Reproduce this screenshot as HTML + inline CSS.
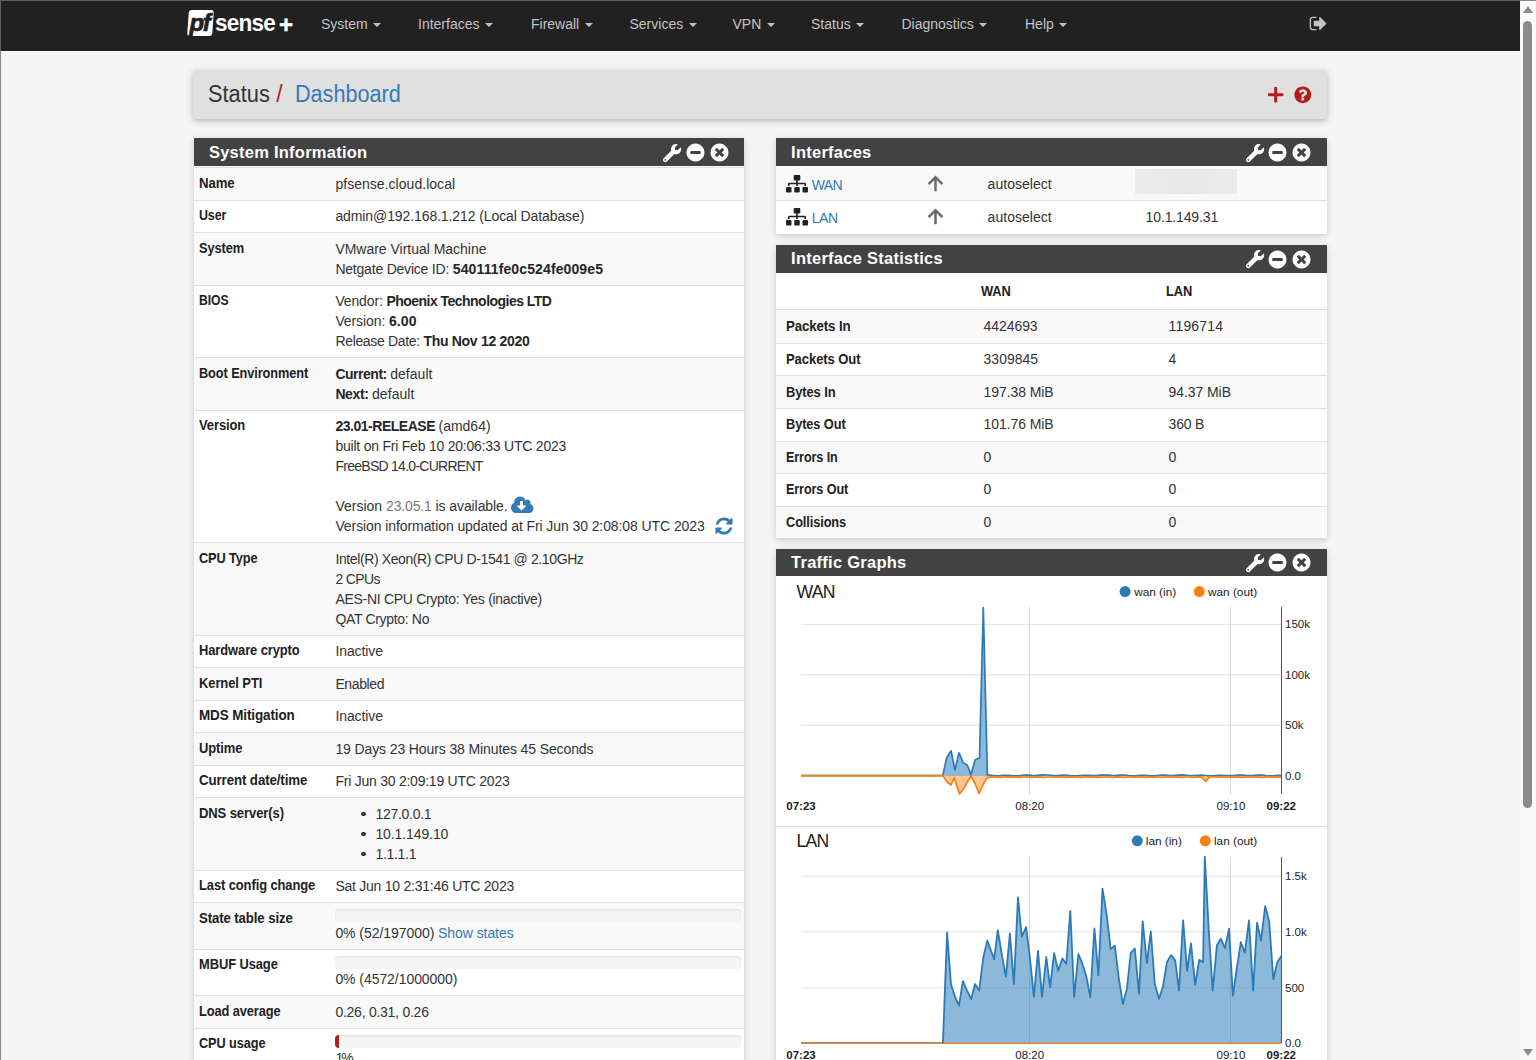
<!DOCTYPE html>
<html lang="en"><head><meta charset="utf-8"><title>pfsense.cloud.local - Status: Dashboard</title>
<style>
html,body{margin:0;padding:0}
body{width:1536px;height:1060px;overflow:hidden;position:relative;background:#f5f5f5;
 font:14px/20px "Liberation Sans",Arial,sans-serif;color:#212121;letter-spacing:-0.1px}
*{box-sizing:border-box}
a{color:#337ab7;text-decoration:none}
.ic{display:inline-block;vertical-align:middle;overflow:visible}
#frameT{position:absolute;left:0;top:0;width:1536px;height:1px;background:rgba(110,110,110,.8);z-index:50}
#frameL{position:absolute;left:0;top:1px;width:1px;height:1059px;background:rgba(110,110,110,.8);z-index:50}
#nav{position:absolute;left:0;top:0;width:1520px;height:51px;background:#212121;border-bottom:0}
#navline{position:absolute;left:0;top:51px;width:1520px;height:1px;background:#fff}
.ni{position:absolute;top:14px;color:#c4c4c4;font-size:14px;line-height:20px;letter-spacing:0;white-space:nowrap}
.ni i{display:inline-block;width:0;height:0;border-left:4.2px solid transparent;border-right:4.2px solid transparent;border-top:4.4px solid #c4c4c4;margin-left:5.6px;vertical-align:1.8px}
#sb{position:absolute;left:1520px;top:1px;width:16px;height:1059px;background:#fafafa}
#sb .th{position:absolute;left:3.4px;top:19.7px;width:9.1px;height:787.6px;border-radius:5px;background:#8b8b8b}
#sb .up{position:absolute;left:2.7px;top:4.7px;width:0;height:0;border-left:5.4px solid transparent;border-right:5.4px solid transparent;border-bottom:7.2px solid #8b8b8b}
#sb .dn{position:absolute;left:2.7px;top:1048px;width:0;height:0;border-left:5.4px solid transparent;border-right:5.4px solid transparent;border-top:7px solid #8b8b8b}
#hdr{position:absolute;left:193px;top:70px;width:1134.4px;height:48.5px;background:#e0e0e0;border-radius:4px;
 box-shadow:0 2px 5px 0 rgba(0,0,0,.16),0 2px 10px 0 rgba(0,0,0,.12)}
#hdr .t{position:absolute;left:0;top:9.9px;font-size:23px;line-height:28px;letter-spacing:0;white-space:nowrap;color:#333}
#hdr .t span,#hdr .t a{position:absolute;top:0;display:inline-block;transform-origin:0 50%}
#hdr .t .sl{color:#b71c1c;left:83.2px}
#hdr .t a{left:101.6px;color:#337ab7;transform:scaleX(.939)}
.panel{position:absolute;background:#fff;box-shadow:0 2px 5px 0 rgba(0,0,0,.11),0 2px 10px 0 rgba(0,0,0,.08)}
.ph{position:relative;height:28.9px;background:#424242;color:#fff;font-weight:700;font-size:16.5px;line-height:28px;padding-left:15px;letter-spacing:.25px;white-space:nowrap}
.ph .ics{position:absolute;right:0;top:0;height:28px}
.row{display:flex;border-top:1px solid #e0e0e0;padding-top:5.5px}
.row.o{background:#f9f9f9}
.lb{width:141.5px;padding-left:5.5px;font-weight:700;white-space:nowrap;position:relative;top:-1px}
.lb span,.b{display:inline-block;transform:scaleX(.92);transform-origin:0 50%}
b{letter-spacing:-0.5px;color:#262626}
.vl{white-space:nowrap;color:#333}
.li{display:inline-block;margin-left:40px;position:relative}
.li:before{content:'';position:absolute;left:-14px;top:8px;width:4.5px;height:4.5px;border-radius:50%;background:#333}
.pb{height:13px;background:#f5f5f5;border-radius:4px;box-shadow:inset 0 1px 2px rgba(0,0,0,.1);width:406px;margin:.6px 0 .3px 0;overflow:hidden}
.pb i{display:block;height:100%;background:#b71c1c}

.ch text{font-family:"Liberation Sans",Arial,sans-serif;font-size:11.5px;fill:#212121;letter-spacing:0}
.ch .lg{font-size:11.8px}
.ch .ttl{font-size:17.6px;letter-spacing:-.75px}
.ch .bx{font-weight:700}
.ch .g{stroke:#e2e2e2;stroke-width:1}
.ch .gv{stroke:#d9d9d9;stroke-width:1;shape-rendering:crispEdges}
.ch .ax{stroke:#555;stroke-width:1;shape-rendering:crispEdges}
</style></head>
<body>
<div id="frameT"></div><div id="frameL"></div>
<div id="nav"><div id="logo" style="position:absolute;left:188px;top:9.5px;width:106px;height:27px"><div style="position:absolute;left:0;top:0;width:25px;height:26px;background:#fff;border-radius:3px;transform:skewX(-4deg)"></div><span style="position:absolute;left:1.5px;top:1px;font:italic 700 24px/24px 'Liberation Sans',sans-serif;letter-spacing:-1.5px;color:#212121;-webkit-text-stroke:.7px #212121">pf</span><span style="position:absolute;left:27px;top:-.2px;font:700 24px/28px 'Liberation Sans',sans-serif;color:#fff;display:inline-block;transform:scaleX(.94);transform-origin:0 50%;letter-spacing:-.85px">sense</span><span style="position:absolute;left:91px;top:1.2px;font:700 24px/28px 'Liberation Sans',sans-serif;color:#fff;letter-spacing:0;-webkit-text-stroke:.5px #fff">+</span></div><div class="ni" style="left:321px">System<i></i></div><div class="ni" style="left:418px">Interfaces<i></i></div><div class="ni" style="left:531px">Firewall<i></i></div><div class="ni" style="left:629.5px">Services<i></i></div><div class="ni" style="left:732.5px">VPN<i></i></div><div class="ni" style="left:811px">Status<i></i></div><div class="ni" style="left:901.5px">Diagnostics<i></i></div><div class="ni" style="left:1025px">Help<i></i></div><svg class="ic" width="19.00" height="19" viewBox="0 0 1792 1792" style="position:absolute;left:1309px;top:14px"><path fill="#c4c4c4" d="M704 1440q0 4 1 20t.5 26.500-3 23.500-10 19.500-20.500 6.500h-320q-119 0-203.500-84.500t-84.500-203.500v-704q0-119 84.500-203.500t203.500-84.500h320q13 0 22.500 9.500t9.500 22.500q0 4 1 20t.5 26.500-3 23.500-10 19.500-20.500 6.500h-320q-66 0-113 47t-47 113v704q0 66 47 113t113 47h312l11.500 1 11.500 3 8 5.500 7 9 2 13.500zm928-544q0 26-19 45l-544 544q-19 19-45 19t-45-19-19-45v-288h-448q-26 0-45-19t-19-45v-384q0-26 19-45t45-19h448v-288q0-26 19-45t45-19 45 19l544 544q19 19 19 45z"/></svg></div><div id="navline"></div>
<div id="hdr"><div class="t"><span style="left:14.7px;transform:scaleX(.948)">Status</span><span class="sl">/</span><a>Dashboard</a></div><svg class="ic" width="15.4" height="15.4" viewBox="0 0 15.4 15.4" style="position:absolute;left:1075.4px;top:17.3px"><path fill="#b71c1c" d="M6.2 .6a.6.6 0 0 1 .6-.6h1.8a.6.6 0 0 1 .6.6v5.6h5.6a.6.6 0 0 1 .6.6v1.8a.6.6 0 0 1-.6.6h-5.6v5.6a.6.6 0 0 1-.6.6h-1.8a.6.6 0 0 1-.6-.6v-5.6h-5.6a.6.6 0 0 1-.6-.6v-1.800a.6.6 0 0 1 .6-.6h5.6z"/></svg><svg class="ic" width="19.60" height="19.6" viewBox="0 0 1792 1792" style="position:absolute;left:1100.3px;top:15.1px"><path fill="#b71c1c" d="M1024 1376v-192q0-14-9-23t-23-9h-192q-14 0-23 9t-9 23v192q0 14 9 23t23 9h192q14 0 23-9t9-23zm256-672q0-88-55.500-163t-138.500-116-170-41q-243 0-371 213-15 24 8 42l132 100q7 6 19 6 16 0 25-12 53-68 86-92 34-24 86-24 48 0 85.500 26t37.500 59q0 38-20 61t-68 45q-63 28-115.500 86.500t-52.500 125.500v36q0 14 9 23t23 9h192q14 0 23-9t9-23q0-19 21.500-49.500t54.500-49.500q32-18 49-28.500t46-35 44.500-48 28-60.500 12.500-81zm384 192q0 209-103 385.5t-279.5 279.5-385.5 103-385.5-103-279.5-279.5-103-385.5 103-385.5 279.5-279.5 385.5-103 385.5 103 279.5 279.5 103 385.5z"/></svg></div>
<div class="panel" style="left:193.9px;top:138.2px;width:550.6px;height:940px"><div class="ph" style="height:28.1px;line-height:28.97px">System Information<svg class="ic" width="18.2" height="18.20" viewBox="0 0 512 512" style="position:absolute;right:63.3px;top:5.55px"><path fill="#fff" d="M507.73 109.1c-2.24-9.03-13.54-12.09-20.12-5.51l-74.36 74.36-67.88-11.31-11.31-67.88 74.36-74.36c6.62-6.62 3.43-17.9-5.66-20.16-47.38-11.74-99.55.91-136.58 37.93-39.64 39.64-50.55 97.1-34.05 147.2L18.74 402.76c-24.99 24.99-24.99 65.51 0 90.5 24.99 24.99 65.51 24.99 90.5 0l213.21-213.21c50.12 16.71 107.47 5.68 147.37-34.22 37.07-37.07 49.7-89.32 37.91-136.73zM64 472c-13.25 0-24-10.75-24-24 0-13.26 10.75-24 24-24s24 10.74 24 24c0 13.25-10.75 24-24 24z"/></svg><svg class="ic" width="21.00" height="21" viewBox="0 0 1792 1792" style="position:absolute;right:38.5px;top:3.95px"><path fill="#fff" d="M1344 960v-128q0-26-19-45t-45-19h-768q-26 0-45 19t-19 45v128q0 26 19 45t45 19h768q26 0 45-19t19-45zm320-64q0 209-103 385.5t-279.5 279.5-385.5 103-385.5-103-279.5-279.5-103-385.5 103-385.5 279.5-279.5 385.5-103 385.5 103 279.5 279.5 103 385.5z"/></svg><svg class="ic" width="21.00" height="21" viewBox="0 0 1792 1792" style="position:absolute;right:14.5px;top:3.95px"><path fill="#fff" d="M1277 1122q0-26-19-45l-181-181 181-181q19-19 19-45 0-27-19-46l-90-90q-19-19-46-19-26 0-45 19l-181 181-181-181q-19-19-45-19-27 0-46 19l-90 90q-19 19-19 46 0 26 19 45l181 181-181 181q-19 19-19 45 0 27 19 46l90 90q19 19 46 19 26 0 45-19l181-181 181 181q19 19 45 19 27 0 46-19l90-90q19-19 19-46zm387-226q0 209-103 385.5t-279.5 279.5-385.5 103-385.5-103-279.5-279.5-103-385.5 103-385.5 279.5-279.5 385.5-103 385.5 103 279.5 279.5 103 385.5z"/></svg></div><div style="height:.9px;background:#f9f9f9"></div><div class="row o" style="height:32.5px"><div class="lb"><span style="transform:scaleX(0.9413)">Name</span></div><div class="vl"><div><span style="letter-spacing:0.033px;">pfsense.cloud.local</span></div></div></div><div class="row" style="height:32.5px"><div class="lb"><span style="transform:scaleX(0.8863)">User</span></div><div class="vl"><div><span style="letter-spacing:-0.097px;">admin@192.168.1.212 (Local Database)</span></div></div></div><div class="row o" style="height:52.5px"><div class="lb"><span style="transform:scaleX(0.9174)">System</span></div><div class="vl"><div><span style="letter-spacing:-0.017px;">VMware Virtual Machine</span></div><div><span style="letter-spacing:-0.210px;">Netgate&nbsp;Device&nbsp;ID:&nbsp;</span><b style="letter-spacing:0.118px;">540111fe0c524fe009e5</b></div></div></div><div class="row" style="height:72.5px"><div class="lb"><span style="transform:scaleX(0.8705)">BIOS</span></div><div class="vl"><div><span style="letter-spacing:-0.145px;">Vendor:&nbsp;</span><b style="letter-spacing:-0.525px;">Phoenix Technologies LTD</b></div><div><span style="letter-spacing:-0.098px;">Version:&nbsp;</span><b style="letter-spacing:0.088px;">6.00</b></div><div><span style="letter-spacing:-0.329px;">Release&nbsp;Date:&nbsp;</span><b style="letter-spacing:-0.293px;">Thu Nov 12 2020</b></div></div></div><div class="row o" style="height:52.5px"><div class="lb"><span style="transform:scaleX(0.9115)">Boot Environment</span></div><div class="vl"><div><b style="letter-spacing:-0.481px;">Current:&nbsp;</b><span style="letter-spacing:0.036px;">default</span></div><div><b style="letter-spacing:-0.384px;">Next:&nbsp;</b><span style="letter-spacing:0.065px;">default</span></div></div></div><div class="row" style="height:132.5px"><div class="lb"><span style="transform:scaleX(0.9250)">Version</span></div><div class="vl"><div><b style="letter-spacing:-0.473px;">23.01-RELEASE&nbsp;</b><span style="letter-spacing:-0.006px;">(amd64)</span></div><div><span style="letter-spacing:-0.222px;">built on Fri Feb 10 20:06:33 UTC 2023</span></div><div><span style="letter-spacing:-0.726px;">FreeBSD 14.0-CURRENT</span></div><div>&nbsp;</div><div><span style="letter-spacing:0.001px;">Version&nbsp;</span><span style="letter-spacing:-0.139px;color:#777">23.05.1&nbsp;</span><span style="letter-spacing:-0.082px;">is&nbsp;available.&nbsp;</span><svg class="ic" width="22.50" height="21" viewBox="0 0 1920 1792" style="margin:-4px 0 0 0"><path fill="#337ab7" d="M1280 928q0-14-9-23-9-9-23-9h-224v-352q0-13-9.500-22.500t-22.500-9.500h-192q-13 0-22.500 9.500t-9.500 22.500v352h-224q-13 0-22.500 9.500t-9.500 22.500q0 14 9 23l352 352q9 9 23 9t23-9l351-351q10-12 10-24zm640 224q0 159-112.500 271.500t-271.500 112.500h-1088q-185 0-316.500-131.500t-131.500-316.500q0-130 70-240t188-165q-2-30-2-43 0-212 150-362t362-150q156 0 285.500 87t188.500 231q71-62 166-62 106 0 181 75t75 181q0 76-41 138 130 31 213.500 135.500t83.500 238.500z"/></svg></div><div><span style="letter-spacing:-0.087px;">Version information updated at Fri Jun 30 2:08:08 UTC 2023</span><svg class="ic" width="20.00" height="20" viewBox="0 0 1792 1792" style="margin:-3px 0 0 9.5px"><path fill="#337ab7" d="M1639 1056q0 5-1 7-64 268-268 434.500t-478 166.500q-146 0-282.500-55t-243.500-157l-129 129q-19 19-45 19t-45-19-19-45v-448q0-26 19-45t45-19h448q26 0 45 19t19 45-19 45l-137 137q71 66 161 102t187 36q134 0 250-65t186-179q11-17 53-117 8-23 30-23h192q13 0 22.500 9.500t9.500 22.500zm25-800v448q0 26-19 45t-45 19h-448q-26 0-45-19t-19-45 19-45l138-138q-148-137-349-137-134 0-250 65t-186 179q-11 17-53 117-8 23-30 23h-199q-13 0-22.500-9.500t-9.500-22.500v-7q65-268 270-434.500t480-166.500q146 0 284 55.500t245 156.500l130-129q19-19 45-19t45 19 19 45z"/></svg></div></div></div><div class="row o" style="height:92.5px"><div class="lb"><span style="transform:scaleX(0.9110)">CPU Type</span></div><div class="vl"><div><span style="letter-spacing:-0.387px;">Intel(R) Xeon(R) CPU D-1541 @ 2.10GHz</span></div><div><span style="letter-spacing:-0.606px;">2 CPUs</span></div><div><span style="letter-spacing:-0.294px;">AES-NI CPU Crypto: Yes (inactive)</span></div><div><span style="letter-spacing:-0.328px;">QAT Crypto: No</span></div></div></div><div class="row" style="height:32.5px"><div class="lb"><span style="transform:scaleX(0.9232)">Hardware crypto</span></div><div class="vl"><div><span style="letter-spacing:-0.081px;">Inactive</span></div></div></div><div class="row o" style="height:32.5px"><div class="lb"><span style="transform:scaleX(0.9271)">Kernel PTI</span></div><div class="vl"><div><span style="letter-spacing:-0.384px;">Enabled</span></div></div></div><div class="row" style="height:32.5px"><div class="lb"><span style="transform:scaleX(0.9594)">MDS Mitigation</span></div><div class="vl"><div><span style="letter-spacing:-0.081px;">Inactive</span></div></div></div><div class="row o" style="height:32.5px"><div class="lb"><span style="transform:scaleX(0.9272)">Uptime</span></div><div class="vl"><div><span style="letter-spacing:-0.112px;">19 Days 23 Hours 38 Minutes 45 Seconds</span></div></div></div><div class="row" style="height:32.5px"><div class="lb"><span style="transform:scaleX(0.9481)">Current date/time</span></div><div class="vl"><div><span style="letter-spacing:-0.239px;">Fri Jun 30 2:09:19 UTC 2023</span></div></div></div><div class="row o" style="height:72.5px"><div class="lb"><span style="transform:scaleX(0.9297)">DNS server(s)</span></div><div class="vl"><div><span class="li"><span style="letter-spacing:-0.277px;">127.0.0.1</span></span></div><div><span class="li"><span style="letter-spacing:-0.097px;">10.1.149.10</span></span></div><div><span class="li"><span style="letter-spacing:-0.290px;">1.1.1.1</span></span></div></div></div><div class="row" style="height:32.5px"><div class="lb"><span style="transform:scaleX(0.9234)">Last config change</span></div><div class="vl"><div><span style="letter-spacing:-0.246px;">Sat Jun 10 2:31:46 UTC 2023</span></div></div></div><div class="row o" style="height:46.5px"><div class="lb"><span style="transform:scaleX(0.9411)">State table size</span></div><div class="vl"><div class="pb"><i style="width:0"></i></div><div><span style="letter-spacing:-0.055px;">0%&nbsp;(52/197000)&nbsp;</span><a><span style="letter-spacing:-0.070px;">Show states</span></a></div></div></div><div class="row" style="height:46.5px"><div class="lb"><span style="transform:scaleX(0.9229)">MBUF Usage</span></div><div class="vl"><div class="pb"><i style="width:0"></i></div><div><span style="letter-spacing:-0.059px;">0% (4572/1000000)</span></div></div></div><div class="row o" style="height:32.5px"><div class="lb"><span style="transform:scaleX(0.9162)">Load average</span></div><div class="vl"><div><span style="letter-spacing:-0.251px;">0.26, 0.31, 0.26</span></div></div></div><div class="row" style="height:46.5px"><div class="lb"><span style="transform:scaleX(0.9091)">CPU usage</span></div><div class="vl"><div class="pb"><i style="width:4px"></i></div><div><span style="letter-spacing:-1.817px;">1%</span></div></div></div></div>
<div class="panel" style="left:776.1px;top:138.2px;width:550.9px;height:95.4px"><div class="ph" style="height:28.1px;line-height:28.97px">Interfaces<svg class="ic" width="18.2" height="18.20" viewBox="0 0 512 512" style="position:absolute;right:63.3px;top:5.55px"><path fill="#fff" d="M507.73 109.1c-2.24-9.03-13.54-12.09-20.12-5.51l-74.36 74.36-67.88-11.31-11.31-67.88 74.36-74.36c6.62-6.62 3.43-17.9-5.66-20.16-47.38-11.74-99.55.91-136.58 37.93-39.64 39.64-50.55 97.1-34.05 147.2L18.74 402.76c-24.99 24.99-24.99 65.51 0 90.5 24.99 24.99 65.51 24.99 90.5 0l213.21-213.21c50.12 16.71 107.47 5.68 147.37-34.22 37.07-37.07 49.7-89.32 37.91-136.73zM64 472c-13.25 0-24-10.75-24-24 0-13.26 10.75-24 24-24s24 10.74 24 24c0 13.25-10.75 24-24 24z"/></svg><svg class="ic" width="21.00" height="21" viewBox="0 0 1792 1792" style="position:absolute;right:38.5px;top:3.95px"><path fill="#fff" d="M1344 960v-128q0-26-19-45t-45-19h-768q-26 0-45 19t-19 45v128q0 26 19 45t45 19h768q26 0 45-19t19-45zm320-64q0 209-103 385.5t-279.5 279.5-385.5 103-385.5-103-279.5-279.5-103-385.5 103-385.5 279.5-279.5 385.5-103 385.5 103 279.5 279.5 103 385.5z"/></svg><svg class="ic" width="21.00" height="21" viewBox="0 0 1792 1792" style="position:absolute;right:14.5px;top:3.95px"><path fill="#fff" d="M1277 1122q0-26-19-45l-181-181 181-181q19-19 19-45 0-27-19-46l-90-90q-19-19-46-19-26 0-45 19l-181 181-181-181q-19-19-45-19-27 0-46 19l-90 90q-19 19-19 46 0 26 19 45l181 181-181 181q-19 19-19 45 0 27 19 46l90 90q19 19 46 19 26 0 45-19l181-181 181 181q19 19 45 19 27 0 46-19l90-90q19-19 19-46zm387-226q0 209-103 385.5t-279.5 279.5-385.5 103-385.5-103-279.5-279.5-103-385.5 103-385.5 279.5-279.5 385.5-103 385.5 103 279.5 279.5 103 385.5z"/></svg></div><div class="row o" style="height:33.9px;position:relative;padding:0;border-top:0;"><svg class="ic" width="22" height="17.60" viewBox="0 0 640 512" style="position:absolute;left:10px;top:8.40px"><path fill="#212121" d="M128 352H32c-17.67 0-32 14.33-32 32v96c0 17.67 14.33 32 32 32h96c17.67 0 32-14.33 32-32v-96c0-17.67-14.33-32-32-32zm-24-80h192v48h48v-48h192v48h48v-57.59c0-21.17-17.23-38.41-38.41-38.41H344v-64h40c17.67 0 32-14.33 32-32V32c0-17.67-14.33-32-32-32H256c-17.67 0-32 14.33-32 32v96c0 17.67 14.33 32 32 32h40v64H94.41C73.23 224 56 241.23 56 262.41V320h48v-48zm264 80h-96c-17.67 0-32 14.33-32 32v96c0 17.67 14.33 32 32 32h96c17.67 0 32-14.33 32-32v-96c0-17.67-14.33-32-32-32zm240 0h-96c-17.67 0-32 14.33-32 32v96c0 17.67 14.33 32 32 32h96c17.67 0 32-14.33 32-32v-96c0-17.67-14.33-32-32-32z"/></svg><a style="position:absolute;left:35.6px;top:8.45px"><span style="letter-spacing:-0.652px;">WAN</span></a><svg class="ic" width="17" height="17" viewBox="0 0 17 17" style="position:absolute;left:151px;top:8.85px"><path d="M8.5 16.3V2.2M1.6 9.1L8.5 2.2l6.9 6.9" fill="none" stroke="#666b6f" stroke-width="2.5" stroke-linejoin="miter"/></svg><span class="vl" style="position:absolute;left:211.5px;top:7.95px"><span style="letter-spacing:0.027px;">autoselect</span></span><span style="position:absolute;left:359.1px;top:3.1px;width:102px;height:25px;background:linear-gradient(90deg,#ececec,#e7e7e7 50%,#ececec)"></span></div><div class="row" style="height:33.3px;position:relative;padding:0;"><svg class="ic" width="22" height="17.60" viewBox="0 0 640 512" style="position:absolute;left:10px;top:6.80px"><path fill="#212121" d="M128 352H32c-17.67 0-32 14.33-32 32v96c0 17.67 14.33 32 32 32h96c17.67 0 32-14.33 32-32v-96c0-17.67-14.33-32-32-32zm-24-80h192v48h48v-48h192v48h48v-57.59c0-21.17-17.23-38.41-38.41-38.41H344v-64h40c17.67 0 32-14.33 32-32V32c0-17.67-14.33-32-32-32H256c-17.67 0-32 14.33-32 32v96c0 17.67 14.33 32 32 32h40v64H94.41C73.23 224 56 241.23 56 262.41V320h48v-48zm264 80h-96c-17.67 0-32 14.33-32 32v96c0 17.67 14.33 32 32 32h96c17.67 0 32-14.33 32-32v-96c0-17.67-14.33-32-32-32zm240 0h-96c-17.67 0-32 14.33-32 32v96c0 17.67 14.33 32 32 32h96c17.67 0 32-14.33 32-32v-96c0-17.67-14.33-32-32-32z"/></svg><a style="position:absolute;left:35.6px;top:6.45px"><span style="letter-spacing:-0.378px;">LAN</span></a><svg class="ic" width="17" height="17" viewBox="0 0 17 17" style="position:absolute;left:151px;top:6.45px"><path d="M8.5 16.3V2.2M1.6 9.1L8.5 2.2l6.9 6.9" fill="none" stroke="#666b6f" stroke-width="2.5" stroke-linejoin="miter"/></svg><span class="vl" style="position:absolute;left:211.5px;top:5.55px"><span style="letter-spacing:0.027px;">autoselect</span></span><span class="vl" style="position:absolute;left:369.5px;top:5.55px"><span style="letter-spacing:-0.134px;">10.1.149.31</span></span></div></div>
<div class="panel" style="left:776.1px;top:245.4px;width:550.9px;height:292.7px"><div class="ph" style="height:27.2px;line-height:26.77px">Interface Statistics<svg class="ic" width="18.2" height="18.20" viewBox="0 0 512 512" style="position:absolute;right:63.3px;top:5.10px"><path fill="#fff" d="M507.73 109.1c-2.24-9.03-13.54-12.09-20.12-5.51l-74.36 74.36-67.88-11.31-11.31-67.88 74.36-74.36c6.62-6.62 3.43-17.9-5.66-20.16-47.38-11.74-99.55.91-136.58 37.93-39.64 39.64-50.55 97.1-34.05 147.2L18.74 402.76c-24.99 24.99-24.99 65.51 0 90.5 24.99 24.99 65.51 24.99 90.5 0l213.21-213.21c50.12 16.71 107.47 5.68 147.37-34.22 37.07-37.07 49.7-89.32 37.91-136.73zM64 472c-13.25 0-24-10.75-24-24 0-13.26 10.75-24 24-24s24 10.74 24 24c0 13.25-10.75 24-24 24z"/></svg><svg class="ic" width="21.00" height="21" viewBox="0 0 1792 1792" style="position:absolute;right:38.5px;top:3.50px"><path fill="#fff" d="M1344 960v-128q0-26-19-45t-45-19h-768q-26 0-45 19t-19 45v128q0 26 19 45t45 19h768q26 0 45-19t19-45zm320-64q0 209-103 385.5t-279.5 279.5-385.5 103-385.5-103-279.5-279.5-103-385.5 103-385.5 279.5-279.5 385.5-103 385.5 103 279.5 279.5 103 385.5z"/></svg><svg class="ic" width="21.00" height="21" viewBox="0 0 1792 1792" style="position:absolute;right:14.5px;top:3.50px"><path fill="#fff" d="M1277 1122q0-26-19-45l-181-181 181-181q19-19 19-45 0-27-19-46l-90-90q-19-19-46-19-26 0-45 19l-181 181-181-181q-19-19-45-19-27 0-46 19l-90 90q-19 19-19 46 0 26 19 45l181 181-181 181q-19 19-19 45 0 27 19 46l90 90q19 19 46 19 26 0 45-19l181-181 181 181q19 19 45 19 27 0 46-19l90-90q19-19 19-46zm387-226q0 209-103 385.5t-279.5 279.5-385.5 103-385.5-103-279.5-279.5-103-385.5 103-385.5 279.5-279.5 385.5-103 385.5 103 279.5 279.5 103 385.5z"/></svg></div><div style="height:37.6px;position:relative;border-bottom:1.6px solid #ddd;font-weight:700"><span class="b" style="position:absolute;left:205px;top:8.2px;transform:scaleX(0.9182)">WAN</span><span class="b" style="position:absolute;left:390.2px;top:8.2px;transform:scaleX(0.9173)">LAN</span></div><div class="row o" style="height:32.7px;position:relative;padding:0;border-top:0;"><span class="b" style="position:absolute;left:10px;top:6.1px;font-weight:700;transform:scaleX(0.9456)">Packets In</span><span class="vl" style="position:absolute;left:207.5px;top:5.8999999999999995px"><span style="letter-spacing:-0.074px;">4424693</span></span><span class="vl" style="position:absolute;left:392.5px;top:5.8999999999999995px"><span style="letter-spacing:0.147px;">1196714</span></span></div><div class="row" style="height:32.55px;position:relative;padding:0;"><span class="b" style="position:absolute;left:10px;top:5.3px;font-weight:700;transform:scaleX(0.9328)">Packets Out</span><span class="vl" style="position:absolute;left:207.5px;top:5.1px"><span style="letter-spacing:-0.017px;">3309845</span></span><span class="vl" style="position:absolute;left:392.5px;top:5.1px"><span style="letter-spacing:-0.197px;">4</span></span></div><div class="row o" style="height:32.55px;position:relative;padding:0;"><span class="b" style="position:absolute;left:10px;top:5.3px;font-weight:700;transform:scaleX(0.9216)">Bytes In</span><span class="vl" style="position:absolute;left:207.5px;top:5.1px"><span style="letter-spacing:-0.083px;">197.38 MiB</span></span><span class="vl" style="position:absolute;left:392.5px;top:5.1px"><span style="letter-spacing:-0.083px;">94.37 MiB</span></span></div><div class="row" style="height:32.55px;position:relative;padding:0;"><span class="b" style="position:absolute;left:10px;top:5.3px;font-weight:700;transform:scaleX(0.9134)">Bytes Out</span><span class="vl" style="position:absolute;left:207.5px;top:5.1px"><span style="letter-spacing:-0.083px;">101.76 MiB</span></span><span class="vl" style="position:absolute;left:392.5px;top:5.1px"><span style="letter-spacing:-0.219px;">360 B</span></span></div><div class="row o" style="height:32.55px;position:relative;padding:0;"><span class="b" style="position:absolute;left:10px;top:5.3px;font-weight:700;transform:scaleX(0.8996)">Errors In</span><span class="vl" style="position:absolute;left:207.5px;top:5.1px"><span style="letter-spacing:-0.197px;">0</span></span><span class="vl" style="position:absolute;left:392.5px;top:5.1px"><span style="letter-spacing:-0.197px;">0</span></span></div><div class="row" style="height:32.55px;position:relative;padding:0;"><span class="b" style="position:absolute;left:10px;top:5.3px;font-weight:700;transform:scaleX(0.8998)">Errors Out</span><span class="vl" style="position:absolute;left:207.5px;top:5.1px"><span style="letter-spacing:-0.197px;">0</span></span><span class="vl" style="position:absolute;left:392.5px;top:5.1px"><span style="letter-spacing:-0.197px;">0</span></span></div><div class="row o" style="height:32.55px;position:relative;padding:0;"><span class="b" style="position:absolute;left:10px;top:5.3px;font-weight:700;transform:scaleX(0.9117)">Collisions</span><span class="vl" style="position:absolute;left:207.5px;top:5.1px"><span style="letter-spacing:-0.197px;">0</span></span><span class="vl" style="position:absolute;left:392.5px;top:5.1px"><span style="letter-spacing:-0.197px;">0</span></span></div></div>
<div class="panel" style="left:776.1px;top:549.1px;width:550.9px;height:530px"><div class="ph" style="height:26.9px;line-height:27.17px">Traffic Graphs<svg class="ic" width="18.2" height="18.20" viewBox="0 0 512 512" style="position:absolute;right:63.3px;top:4.95px"><path fill="#fff" d="M507.73 109.1c-2.24-9.03-13.54-12.09-20.12-5.51l-74.36 74.36-67.88-11.31-11.31-67.88 74.36-74.36c6.62-6.62 3.43-17.9-5.66-20.16-47.38-11.74-99.55.91-136.58 37.93-39.64 39.64-50.55 97.1-34.05 147.2L18.74 402.76c-24.99 24.99-24.99 65.51 0 90.5 24.99 24.99 65.51 24.99 90.5 0l213.21-213.21c50.12 16.71 107.47 5.68 147.37-34.22 37.07-37.07 49.7-89.32 37.91-136.73zM64 472c-13.25 0-24-10.75-24-24 0-13.26 10.75-24 24-24s24 10.74 24 24c0 13.25-10.75 24-24 24z"/></svg><svg class="ic" width="21.00" height="21" viewBox="0 0 1792 1792" style="position:absolute;right:38.5px;top:3.35px"><path fill="#fff" d="M1344 960v-128q0-26-19-45t-45-19h-768q-26 0-45 19t-19 45v128q0 26 19 45t45 19h768q26 0 45-19t19-45zm320-64q0 209-103 385.5t-279.5 279.5-385.5 103-385.5-103-279.5-279.5-103-385.5 103-385.5 279.5-279.5 385.5-103 385.5 103 279.5 279.5 103 385.5z"/></svg><svg class="ic" width="21.00" height="21" viewBox="0 0 1792 1792" style="position:absolute;right:14.5px;top:3.35px"><path fill="#fff" d="M1277 1122q0-26-19-45l-181-181 181-181q19-19 19-45 0-27-19-46l-90-90q-19-19-46-19-26 0-45 19l-181 181-181-181q-19-19-45-19-27 0-46 19l-90 90q-19 19-19 46 0 26 19 45l181 181-181 181q-19 19-19 45 0 27 19 46l90 90q19 19 46 19 26 0 45-19l181-181 181 181q19 19 45 19 27 0 46-19l90-90q19-19 19-46zm387-226q0 209-103 385.5t-279.5 279.5-385.5 103-385.5-103-279.5-279.5-103-385.5 103-385.5 279.5-279.5 385.5-103 385.5 103 279.5 279.5 103 385.5z"/></svg></div><svg class="ch" style="position:absolute;left:-0.1px;top:27.90px" width="551" height="250" viewBox="776 577 551 250"><text class="ttl" x="796.5" y="597.6">WAN</text><circle cx="1125.1" cy="591.6" r="5.5" fill="#2b7bb9"/><text class="lg" x="1134.2" y="595.7">wan (in)</text><circle cx="1199.3" cy="591.6" r="5.5" fill="#ff7f0e"/><text class="lg" x="1208.0" y="595.7">wan (out)</text><line class="g" x1="801.0" x2="1281.3" y1="624.4" y2="624.4"/><text x="1285" y="627.7">150k</text><line class="g" x1="801.0" x2="1281.3" y1="674.8" y2="674.8"/><text x="1285" y="678.6">100k</text><line class="g" x1="801.0" x2="1281.3" y1="725.2" y2="725.2"/><text x="1285" y="728.8">50k</text><line class="g" x1="801.0" x2="1281.3" y1="775.6" y2="775.6"/><text x="1285" y="779.9">0.0</text><line class="gv" x1="1029.7" x2="1029.7" y1="607.3" y2="794.2"/><line class="gv" x1="1230.9" x2="1230.9" y1="607.3" y2="794.2"/><polygon points="801.0,775.6 942.8,775.6 946.6,758.0 951.1,750.8 954.9,770.0 959.0,752.9 963.2,762.6 967.3,765.3 971.0,774.6 975.2,759.7 979.5,758.0 983.3,607.6 987.4,774.8 991.5,775.4 995.5,775.8 999.6,775.7 1003.6,775.4 1007.7,775.3 1011.7,775.7 1015.7,775.9 1019.8,775.6 1023.8,775.2 1027.9,775.1 1031.9,775.4 1035.9,775.5 1040.0,775.2 1044.0,774.9 1048.1,775.0 1052.1,775.4 1056.1,775.6 1060.2,775.4 1064.2,775.2 1068.3,775.4 1072.3,775.8 1076.3,775.8 1080.4,775.5 1084.4,775.3 1088.5,775.4 1092.5,775.7 1096.5,775.6 1100.6,775.1 1104.6,775.0 1108.7,775.2 1112.7,775.5 1116.7,775.4 1120.8,775.1 1124.8,775.1 1128.9,775.5 1132.9,775.8 1136.9,775.6 1141.0,775.3 1145.0,775.4 1149.1,775.7 1153.1,775.9 1157.1,775.5 1161.2,775.2 1165.2,775.2 1169.3,775.5 1173.3,775.5 1177.3,775.2 1181.4,774.9 1185.4,775.1 1189.5,775.5 1193.5,775.6 1197.5,775.3 1201.6,775.2 1205.6,775.5 1209.7,775.8 1213.7,775.8 1217.7,775.4 1221.8,775.3 1225.8,775.5 1229.9,775.7 1233.9,775.5 1237.9,775.1 1242.0,775.0 1246.0,775.3 1250.1,775.5 1254.1,775.3 1258.1,775.0 1262.2,775.1 1266.2,775.5 1270.3,775.8 1274.3,775.6 1278.3,775.3 1281.3,775.4 1281.3,775.7 801,775.7" fill="#2b7bb9" fill-opacity=".54"/><polyline points="801.0,775.6 942.8,775.6 946.6,758.0 951.1,750.8 954.9,770.0 959.0,752.9 963.2,762.6 967.3,765.3 971.0,774.6 975.2,759.7 979.5,758.0 983.3,607.6 987.4,774.8 991.5,775.4 995.5,775.8 999.6,775.7 1003.6,775.4 1007.7,775.3 1011.7,775.7 1015.7,775.9 1019.8,775.6 1023.8,775.2 1027.9,775.1 1031.9,775.4 1035.9,775.5 1040.0,775.2 1044.0,774.9 1048.1,775.0 1052.1,775.4 1056.1,775.6 1060.2,775.4 1064.2,775.2 1068.3,775.4 1072.3,775.8 1076.3,775.8 1080.4,775.5 1084.4,775.3 1088.5,775.4 1092.5,775.7 1096.5,775.6 1100.6,775.1 1104.6,775.0 1108.7,775.2 1112.7,775.5 1116.7,775.4 1120.8,775.1 1124.8,775.1 1128.9,775.5 1132.9,775.8 1136.9,775.6 1141.0,775.3 1145.0,775.4 1149.1,775.7 1153.1,775.9 1157.1,775.5 1161.2,775.2 1165.2,775.2 1169.3,775.5 1173.3,775.5 1177.3,775.2 1181.4,774.9 1185.4,775.1 1189.5,775.5 1193.5,775.6 1197.5,775.3 1201.6,775.2 1205.6,775.5 1209.7,775.8 1213.7,775.8 1217.7,775.4 1221.8,775.3 1225.8,775.5 1229.9,775.7 1233.9,775.5 1237.9,775.1 1242.0,775.0 1246.0,775.3 1250.1,775.5 1254.1,775.3 1258.1,775.0 1262.2,775.1 1266.2,775.5 1270.3,775.8 1274.3,775.6 1278.3,775.3 1281.3,775.4" fill="none" stroke="#2b7bb9" stroke-width="1.7" stroke-linejoin="round"/><polygon points="801.0,775.6 942.8,775.6 947.0,782.0 951.0,785.0 954.2,777.7 959.4,794.0 963.6,789.0 967.3,782.0 971.0,776.0 975.2,784.0 979.1,793.3 983.3,784.0 987.4,777.7 991.5,777.1 995.5,777.0 999.6,777.4 1003.6,777.0 1007.7,776.9 1011.7,777.2 1015.7,777.0 1019.8,777.4 1023.8,777.0 1027.9,777.0 1031.9,777.3 1035.9,776.9 1040.0,777.1 1044.0,777.5 1048.1,777.0 1052.1,777.0 1056.1,777.2 1060.2,777.0 1064.2,777.4 1068.3,777.0 1072.3,777.1 1076.3,777.0 1080.4,777.4 1084.4,777.0 1088.5,776.9 1092.5,777.2 1096.5,777.0 1100.6,777.4 1104.6,777.0 1108.7,777.0 1112.7,777.3 1116.7,776.9 1120.8,777.1 1124.8,777.5 1128.9,777.0 1132.9,777.0 1136.9,777.2 1141.0,777.0 1145.0,777.4 1149.1,777.0 1153.1,777.1 1157.1,777.0 1161.2,777.4 1165.2,777.0 1169.3,776.9 1173.3,777.2 1177.3,777.0 1181.4,777.4 1185.4,777.0 1189.5,777.0 1193.5,777.3 1197.5,776.9 1201.6,777.1 1205.6,781.4 1209.7,777.0 1213.7,777.0 1217.7,777.2 1221.8,777.0 1225.8,777.4 1229.9,777.0 1233.9,777.1 1237.9,777.0 1242.0,777.4 1246.0,777.0 1250.1,776.9 1254.1,777.2 1258.1,777.0 1262.2,777.4 1266.2,777.0 1270.3,777.0 1274.3,777.3 1278.3,776.9 1281.3,777.4 1281.3,775.7 801,775.7" fill="#ff7f0e" fill-opacity=".45"/><polyline points="801.0,775.6 942.8,775.6 947.0,782.0 951.0,785.0 954.2,777.7 959.4,794.0 963.6,789.0 967.3,782.0 971.0,776.0 975.2,784.0 979.1,793.3 983.3,784.0 987.4,777.7 991.5,777.1 995.5,777.0 999.6,777.4 1003.6,777.0 1007.7,776.9 1011.7,777.2 1015.7,777.0 1019.8,777.4 1023.8,777.0 1027.9,777.0 1031.9,777.3 1035.9,776.9 1040.0,777.1 1044.0,777.5 1048.1,777.0 1052.1,777.0 1056.1,777.2 1060.2,777.0 1064.2,777.4 1068.3,777.0 1072.3,777.1 1076.3,777.0 1080.4,777.4 1084.4,777.0 1088.5,776.9 1092.5,777.2 1096.5,777.0 1100.6,777.4 1104.6,777.0 1108.7,777.0 1112.7,777.3 1116.7,776.9 1120.8,777.1 1124.8,777.5 1128.9,777.0 1132.9,777.0 1136.9,777.2 1141.0,777.0 1145.0,777.4 1149.1,777.0 1153.1,777.1 1157.1,777.0 1161.2,777.4 1165.2,777.0 1169.3,776.9 1173.3,777.2 1177.3,777.0 1181.4,777.4 1185.4,777.0 1189.5,777.0 1193.5,777.3 1197.5,776.9 1201.6,777.1 1205.6,781.4 1209.7,777.0 1213.7,777.0 1217.7,777.2 1221.8,777.0 1225.8,777.4 1229.9,777.0 1233.9,777.1 1237.9,777.0 1242.0,777.4 1246.0,777.0 1250.1,776.9 1254.1,777.2 1258.1,777.0 1262.2,777.4 1266.2,777.0 1270.3,777.0 1274.3,777.3 1278.3,776.9 1281.3,777.4" fill="none" stroke="#ff7f0e" stroke-width="1.7" stroke-linejoin="round"/><line class="ax" x1="1281.3" x2="1281.3" y1="607.3" y2="794.2"/><text class="bx" x="801" y="810.1" text-anchor="middle">07:23</text><text x="1029.7" y="810.1" text-anchor="middle">08:20</text><text x="1230.9" y="810.1" text-anchor="middle">09:10</text><text class="bx" x="1281.3" y="810.1" text-anchor="middle">09:22</text></svg><svg class="ch" style="position:absolute;left:-0.1px;top:276.90px" width="551" height="250" viewBox="776 826 551 250"><line x1="776" x2="1328" y1="826.5" y2="826.5" stroke="#ddd" stroke-width="1.2"/><text class="ttl" x="796.5" y="846.8">LAN</text><circle cx="1137.3" cy="840.8" r="5.5" fill="#2b7bb9"/><text class="lg" x="1145.8" y="844.9">lan (in)</text><circle cx="1205.3" cy="840.8" r="5.5" fill="#ff7f0e"/><text class="lg" x="1214.0" y="844.9">lan (out)</text><line class="g" x1="801.0" x2="1281.3" y1="876.2" y2="876.2"/><text x="1285" y="880.0">1.5k</text><line class="g" x1="801.0" x2="1281.3" y1="931.8" y2="931.8"/><text x="1285" y="936.0">1.0k</text><line class="g" x1="801.0" x2="1281.3" y1="987.9" y2="987.9"/><text x="1285" y="991.9">500</text><line class="g" x1="801.0" x2="1281.3" y1="1043.2" y2="1043.2"/><text x="1285" y="1046.9">0.0</text><line class="gv" x1="1029.7" x2="1029.7" y1="856.5" y2="1043.2"/><line class="gv" x1="1230.9" x2="1230.9" y1="856.5" y2="1043.2"/><polygon points="801.0,1043.2 942.9,1043.2 947.1,932.3 951.0,984.3 954.8,996.2 959.0,1005.7 962.9,981.1 967.1,990.6 971.2,999.1 975.0,984.0 979.2,990.6 983.3,957.5 987.3,940.6 991.0,950.9 994.2,959.1 997.8,930.2 1002.0,955.7 1005.9,976.8 1009.9,933.4 1013.9,984.0 1018.0,897.5 1021.8,936.8 1026.1,927.0 1029.9,957.5 1033.9,996.8 1038.0,950.9 1042.0,996.8 1046.3,957.0 1050.1,987.2 1054.1,953.2 1058.2,970.8 1062.4,958.5 1066.3,963.8 1070.3,910.8 1074.2,996.8 1078.4,954.2 1082.2,963.2 1086.3,976.4 1090.3,997.2 1094.4,928.3 1098.4,975.5 1102.5,888.7 1106.7,915.1 1110.7,949.1 1114.8,945.7 1118.8,978.3 1122.9,1003.8 1126.9,988.7 1130.8,952.8 1134.8,948.5 1139.0,993.8 1142.7,921.3 1146.9,963.2 1150.8,931.5 1154.8,984.0 1159.0,998.7 1162.9,986.8 1166.9,962.3 1171.0,955.1 1175.2,960.4 1179.0,990.6 1183.1,920.4 1187.1,970.8 1191.0,943.4 1195.2,984.9 1199.2,959.8 1203.1,962.3 1204.8,856.6 1208.8,931.1 1212.7,990.6 1216.9,945.3 1220.8,938.7 1225.0,948.1 1229.0,928.7 1232.9,995.7 1236.9,967.9 1240.8,942.1 1244.8,952.8 1249.0,920.4 1253.1,990.6 1257.1,922.6 1261.0,940.6 1265.2,906.2 1269.2,921.7 1273.3,979.2 1277.3,962.3 1281.3,956.0 1281.3,1043.2 801,1043.2" fill="#2b7bb9" fill-opacity=".54"/><polyline points="801.0,1043.2 942.9,1043.2 947.1,932.3 951.0,984.3 954.8,996.2 959.0,1005.7 962.9,981.1 967.1,990.6 971.2,999.1 975.0,984.0 979.2,990.6 983.3,957.5 987.3,940.6 991.0,950.9 994.2,959.1 997.8,930.2 1002.0,955.7 1005.9,976.8 1009.9,933.4 1013.9,984.0 1018.0,897.5 1021.8,936.8 1026.1,927.0 1029.9,957.5 1033.9,996.8 1038.0,950.9 1042.0,996.8 1046.3,957.0 1050.1,987.2 1054.1,953.2 1058.2,970.8 1062.4,958.5 1066.3,963.8 1070.3,910.8 1074.2,996.8 1078.4,954.2 1082.2,963.2 1086.3,976.4 1090.3,997.2 1094.4,928.3 1098.4,975.5 1102.5,888.7 1106.7,915.1 1110.7,949.1 1114.8,945.7 1118.8,978.3 1122.9,1003.8 1126.9,988.7 1130.8,952.8 1134.8,948.5 1139.0,993.8 1142.7,921.3 1146.9,963.2 1150.8,931.5 1154.8,984.0 1159.0,998.7 1162.9,986.8 1166.9,962.3 1171.0,955.1 1175.2,960.4 1179.0,990.6 1183.1,920.4 1187.1,970.8 1191.0,943.4 1195.2,984.9 1199.2,959.8 1203.1,962.3 1204.8,856.6 1208.8,931.1 1212.7,990.6 1216.9,945.3 1220.8,938.7 1225.0,948.1 1229.0,928.7 1232.9,995.7 1236.9,967.9 1240.8,942.1 1244.8,952.8 1249.0,920.4 1253.1,990.6 1257.1,922.6 1261.0,940.6 1265.2,906.2 1269.2,921.7 1273.3,979.2 1277.3,962.3 1281.3,956.0" fill="none" stroke="#2b7bb9" stroke-width="1.8" stroke-linejoin="round"/><line x1="801" x2="1281.3" y1="1043.4" y2="1043.4" stroke="#ff7f0e" stroke-width="1.3"/><line class="ax" x1="1281.3" x2="1281.3" y1="856.5" y2="1043.2"/><text class="bx" x="801" y="1058.6" text-anchor="middle">07:23</text><text x="1029.7" y="1058.6" text-anchor="middle">08:20</text><text x="1230.9" y="1058.6" text-anchor="middle">09:10</text><text class="bx" x="1281.3" y="1058.6" text-anchor="middle">09:22</text></svg></div>
<div id="sb"><div class="up"></div><div class="th"></div><div class="dn"></div></div>
</body></html>
